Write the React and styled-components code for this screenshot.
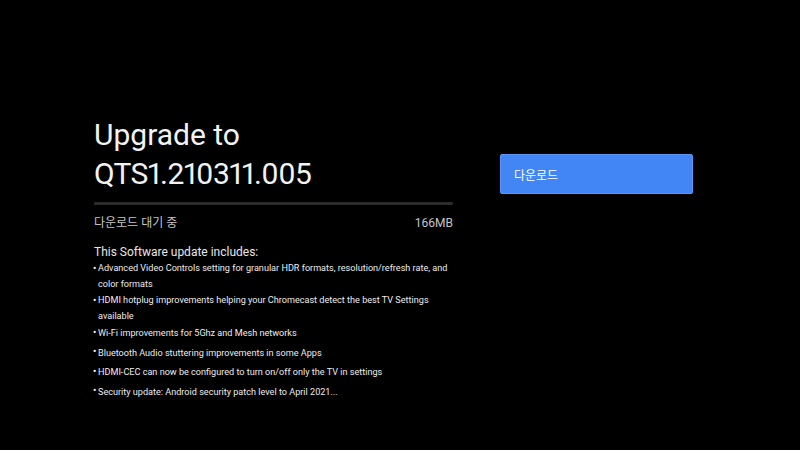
import React from 'react';
import styled, { createGlobalStyle } from 'styled-components';

const GlobalStyle = createGlobalStyle`
  html, body {
    margin: 0;
    padding: 0;
    background: #000;
  }
  body {
    font-family: Roboto, "Noto Sans CJK KR", sans-serif;
    color: #fff;
  }
`;

const Screen = styled.main`
  width: 800px;
  height: 450px;
  background: #000;
  display: flex;
  gap: 47px;
  padding: 115px 0 0 94px;
  box-sizing: border-box;
`;

const Details = styled.section`
  width: 359px;
  display: flex;
  flex-direction: column;
`;

const Title = styled.h1`
  margin: 0;
  font-size: 30px;
  line-height: 39px;
  font-weight: 400;
  color: #f2f2f2;
  font-variant-numeric: proportional-nums;
`;

const Version = styled.span`
  letter-spacing: -0.6px;
`;

const Progress = styled.div`
  height: 3px;
  margin-top: 9px;
  background: #2b2b2b;
  border-radius: 1px;
`;

const StatusRow = styled.div`
  margin-top: 10px;
  display: flex;
  justify-content: space-between;
  font-size: 12px;
  line-height: 16px;
  color: #c4c4c4;
`;

const NotesTitle = styled.h2`
  margin: 12.5px 0 0;
  font-size: 12px;
  line-height: 16px;
  font-weight: 400;
  color: #e6e6e6;
`;

const Notes = styled.ul`
  list-style: none;
  margin: 0;
  padding: 0;
`;

const Note = styled.li`
  display: flex;
  align-items: center;
  min-height: 19.5px;
  font-size: 9.1px;
  line-height: 16px;
  color: #ececec;

  &::before {
    content: '•';
    align-self: flex-start;
    margin-left: -1px;
    width: 4px;
    flex: none;
    font-weight: 700;
  }
  span {
    padding-left: 1px;
  }
`;

const Actions = styled.aside`
  padding-top: 39px;
`;

const DownloadButton = styled.button`
  width: 193px;
  height: 40px;
  padding: 0 13px;
  display: flex;
  align-items: center;
  background: #4285f4;
  border: 1px solid #5a96f7;
  border-radius: 2px;
  color: #fff;
  font-family: Roboto, "Noto Sans CJK KR", sans-serif;
  font-size: 12px;
  cursor: pointer;
`;

const notes = [
  'Advanced Video Controls setting for granular HDR formats, resolution/refresh rate, and color formats',
  'HDMI hotplug improvements helping your Chromecast detect the best TV Settings available',
  'Wi-Fi improvements for 5Ghz and Mesh networks',
  'Bluetooth Audio stuttering improvements in some Apps',
  'HDMI-CEC can now be configured to turn on/off only the TV in settings',
  'Security update: Android security patch level to April 2021...',
];

export default function App() {
  return (
    <>
      <GlobalStyle />
      <Screen>
        <Details>
          <Title>
            Upgrade to
            <br />
            <Version>QTS1.210311.005</Version>
          </Title>
          <Progress />
          <StatusRow>
            <span>다운로드 대기 중</span>
            <span>166MB</span>
          </StatusRow>
          <NotesTitle>This Software update includes:</NotesTitle>
          <Notes>
            {notes.map(note => (
              <Note key={note}>
                <span>{note}</span>
              </Note>
            ))}
          </Notes>
        </Details>
        <Actions>
          <DownloadButton>다운로드</DownloadButton>
        </Actions>
      </Screen>
    </>
  );
}
